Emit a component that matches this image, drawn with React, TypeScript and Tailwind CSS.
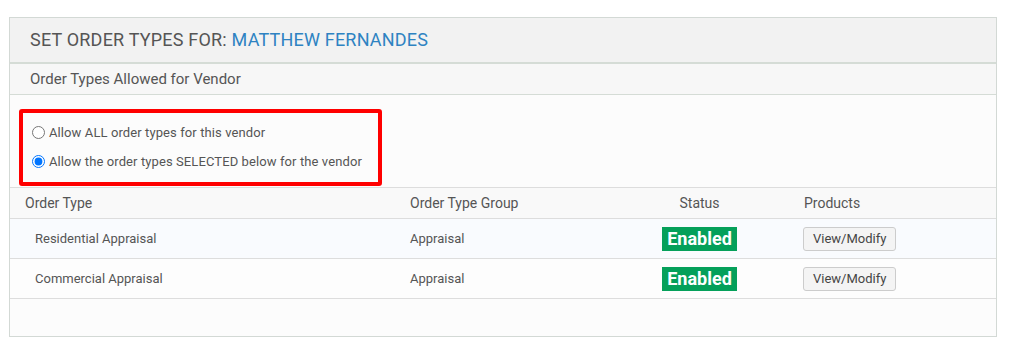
import React from "react";

const rows = [
  { type: "Residential Appraisal", group: "Appraisal", bg: "bg-[#f9fbfe]" },
  { type: "Commercial Appraisal", group: "Appraisal", bg: "bg-[#fdfdfd]" },
];

export default function App() {
  return (
    <div className="min-h-screen bg-white pt-[17px] pl-[9px] pr-[14px] font-['Roboto',sans-serif] text-[#555]">
      <div className="border border-[#d3d9d5] bg-[#fcfcfc]">
        {/* Title */}
        <div className="h-[46px] bg-[#f2f2f2] border-b-2 border-[#d5dcd6] flex items-center px-[20px]">
          <h1 className="text-[18px] text-[#555] leading-none tracking-[0.2px]">
            SET ORDER TYPES FOR: <span className="text-[#2e83c2]">MATTHEW FERNANDES</span>
          </h1>
        </div>

        <div className="h-[31px] bg-[#f7f7f7] border-b border-[#d5dcd6] flex items-center px-[20px] text-[15px]">
          Order Types Allowed for Vendor
        </div>

        {/* Radios */}
        <div className="pt-[14px] pl-[9px] pb-[1px]">
          <div className="w-[363px] h-[77px] border-4 border-[#ff0000] rounded-[3px] flex flex-col justify-center gap-[16px] pl-[9px] pb-[2px] text-[13px] tracking-[0.1px]">
            <label className="flex items-center gap-[4px] leading-none">
              <input type="radio" name="ot" readOnly className="w-[13px] h-[13px] m-0" />
              Allow ALL order types for this vendor
            </label>
            <label className="flex items-center gap-[4px] leading-none">
              <input type="radio" name="ot" defaultChecked className="w-[13px] h-[13px] m-0" />
              Allow the order types SELECTED below for the vendor
            </label>
          </div>
        </div>

        {/* Table */}
        <div className="border-t border-[#dddddd]">
          <div className="grid grid-cols-[385px_205px_199px_1fr] h-[31px] items-center bg-[#f9f9f9] border-b border-[#dddddd] text-[14px]">
            <div className="pl-[15px]">Order Type</div>
            <div className="pl-[15px]">Order Type Group</div>
            <div className="text-center">Status</div>
            <div className="pl-[5px]">Products</div>
          </div>
          {rows.map((r) => (
            <div
              key={r.type}
              className={`grid grid-cols-[385px_205px_199px_1fr] h-[40px] items-center border-b border-[#dddddd] text-[13px] ${r.bg}`}
            >
              <div className="pl-[25px]">{r.type}</div>
              <div className="pl-[15px]">{r.group}</div>
              <div className="flex justify-center">
                <span className="bg-[#05a05a] text-white font-bold text-[18px] leading-[24px] px-[5px]">Enabled</span>
              </div>
              <div className="pl-[4px]">
                <button className="h-[24px] px-[9px] bg-[#f4f4f4] border border-[#cccccc] rounded-[3px] text-[13px] text-[#444]">
                  View/Modify
                </button>
              </div>
            </div>
          ))}
          <div className="h-[37px]" />
        </div>
      </div>
    </div>
  );
}
